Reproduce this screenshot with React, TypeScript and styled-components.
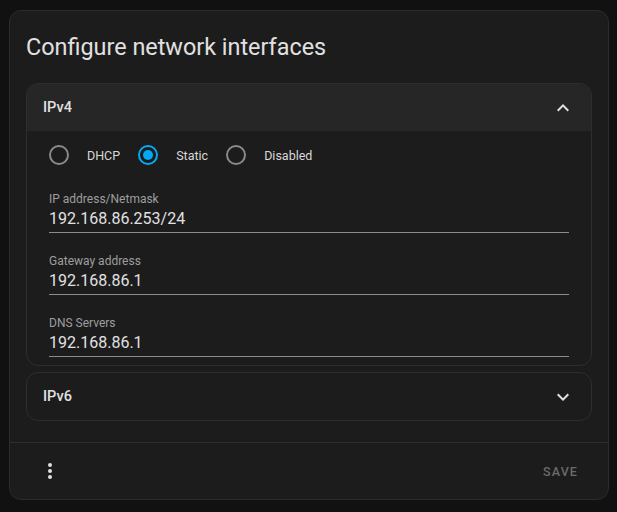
import styled, { createGlobalStyle } from "styled-components";

const GlobalStyle = createGlobalStyle`
	html, body {
		margin: 0;
		padding: 0;
		background: #111111;
		font-family: Roboto, "Noto Sans", sans-serif;
		-webkit-font-smoothing: antialiased;
	}
`;

const Page = styled.div`
	width: 617px;
	height: 512px;
	box-sizing: border-box;
	padding: 10px 8px 0 9px;
`;

const Dialog = styled.div`
	background: #1c1c1c;
	border: 1px solid #2c2c2c;
	border-radius: 12px;
	height: 490px;
	box-sizing: border-box;
	display: flex;
	flex-direction: column;
`;

const Body = styled.div`
	padding: 20px 16px 20px 16px;
	display: flex;
	flex-direction: column;
`;

const Title = styled.h2`
	margin: 0 0 20px 0;
	font-size: 23.4px;
	line-height: 32px;
	font-weight: 400;
	color: #e1e1e1;
`;

const Panel = styled.div`
	border: 1px solid #2e2e2e;
	border-radius: 12px;
	overflow: hidden;
	& + & {
		margin-top: 6px;
	}
`;

const PanelHeader = styled.div<{ open: boolean }>`
	height: 47px;
	display: flex;
	align-items: center;
	justify-content: space-between;
	padding: 0 16px;
	background: ${(p) => (p.open ? "#262626" : "transparent")};
	font-size: 14.5px;
	font-weight: 500;
	color: #e1e1e1;
`;

const PanelContent = styled.div`
	padding: 4px 22px 8px 22px;
`;

const RadioRow = styled.div`
	height: 40px;
	display: flex;
	align-items: center;
`;

const RadioItem = styled.label`
	display: flex;
	align-items: center;
`;

const RadioCircle = styled.span<{ checked: boolean }>`
	width: 20px;
	height: 20px;
	box-sizing: border-box;
	border-radius: 50%;
	border: 2px solid ${(p) => (p.checked ? "#03a9f4" : "#8a8a8a")};
	display: flex;
	align-items: center;
	justify-content: center;
	margin-right: 18px;
	&::after {
		content: "";
		width: 10px;
		height: 10px;
		border-radius: 50%;
		background: ${(p) => (p.checked ? "#03a9f4" : "transparent")};
	}
`;

const RadioLabel = styled.span`
	font-size: 12.5px;
	color: #d8d8d8;
	margin-right: 18px;
`;

const Fields = styled.div`
	margin-top: 16px;
	display: flex;
	flex-direction: column;
	gap: 20px;
`;

const Field = styled.div`
	border-bottom: 1px solid #8c8c8c;
`;

const FieldLabel = styled.div`
	font-size: 12px;
	line-height: 16px;
	color: #9e9e9e;
`;

const FieldValue = styled.div`
	font-size: 16px;
	line-height: 24px;
	color: #e1e1e1;
	padding-bottom: 1px;
`;

const Divider = styled.div`
	height: 1px;
	background: #2e2e2e;
	margin-top: auto;
`;

const Footer = styled.div`
	height: 56px;
	display: flex;
	align-items: center;
	justify-content: space-between;
	padding: 0 22px 0 28px;
`;

const IconButton = styled.span`
	width: 24px;
	height: 24px;
	display: flex;
	color: #e1e1e1;
`;

const SaveButton = styled.span`
	padding: 0 8px;
	font-size: 12.5px;
	font-weight: 500;
	letter-spacing: 1.1px;
	color: #6b6b6b;
	text-transform: uppercase;
`;

const Chevron = ({ up }: { up: boolean }) => (
	<IconButton>
		<svg width="24" height="24" viewBox="0 0 24 24">
			<path
				fill="currentColor"
				d={
					up
						? "M7.41,15.41L12,10.83L16.59,15.41L18,14L12,8L6,14L7.41,15.41Z"
						: "M7.41,8.58L12,13.17L16.59,8.58L18,10L12,16L6,10L7.41,8.58Z"
				}
			/>
		</svg>
	</IconButton>
);

const modes = ["DHCP", "Static", "Disabled"];
const fields = [
	{ label: "IP address/Netmask", value: "192.168.86.253/24" },
	{ label: "Gateway address", value: "192.168.86.1" },
	{ label: "DNS Servers", value: "192.168.86.1" },
];

export default function App() {
	return (
		<>
			<GlobalStyle />
			<Page>
				<Dialog>
					<Body>
						<Title>Configure network interfaces</Title>
						<Panel>
							<PanelHeader open>
								IPv4
								<Chevron up />
							</PanelHeader>
							<PanelContent>
								<RadioRow>
									{modes.map((m) => (
										<RadioItem key={m}>
											<RadioCircle checked={m === "Static"} />
											<RadioLabel>{m}</RadioLabel>
										</RadioItem>
									))}
								</RadioRow>
								<Fields>
									{fields.map((f) => (
										<Field key={f.label}>
											<FieldLabel>{f.label}</FieldLabel>
											<FieldValue>{f.value}</FieldValue>
										</Field>
									))}
								</Fields>
							</PanelContent>
						</Panel>
						<Panel>
							<PanelHeader open={false}>
								IPv6
								<Chevron up={false} />
							</PanelHeader>
						</Panel>
					</Body>
					<Divider />
					<Footer>
						<IconButton>
							<svg width="24" height="24" viewBox="0 0 24 24">
								<path
									fill="currentColor"
									d="M12,16A2,2 0 0,1 14,18A2,2 0 0,1 12,20A2,2 0 0,1 10,18A2,2 0 0,1 12,16M12,10A2,2 0 0,1 14,12A2,2 0 0,1 12,14A2,2 0 0,1 10,12A2,2 0 0,1 12,10M12,4A2,2 0 0,1 14,6A2,2 0 0,1 12,8A2,2 0 0,1 10,6A2,2 0 0,1 12,4Z"
								/>
							</svg>
						</IconButton>
						<SaveButton>Save</SaveButton>
					</Footer>
				</Dialog>
			</Page>
		</>
	);
}
